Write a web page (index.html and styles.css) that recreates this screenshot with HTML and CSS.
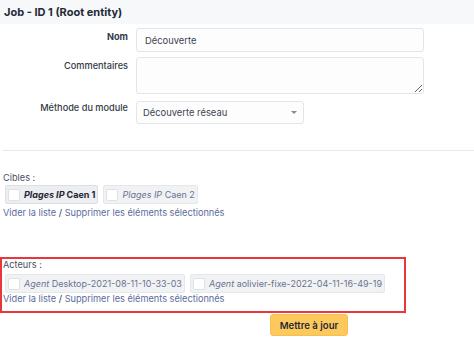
FILE: index.html
```html
<!DOCTYPE html>
<html lang="fr">
<head>
    <meta charset="UTF-8">
    <title>Job - ID 1</title>
    <link rel="stylesheet" href="styles.css">
</head>
<body>
    <div class="card-header">Job - ID 1 (Root entity)</div>

    <form class="job-form">
        <div class="form-row">
            <label class="form-label label-strong">Nom</label>
            <input class="form-input" type="text" value="Découverte">
        </div>
        <div class="form-row">
            <label class="form-label">Commentaires</label>
            <textarea class="form-textarea"></textarea>
        </div>
        <div class="form-row">
            <label class="form-label">Méthode du module</label>
            <div class="form-select">
                <span>Découverte réseau</span>
                <span class="select-arrow"></span>
            </div>
        </div>

        <hr class="separator">

        <div class="items-block targets">
            <div class="items-title">Cibles :</div>
            <div class="chips">
                <span class="chip chip-active"><span class="chip-check"></span><em>Plages IP</em>&nbsp;Caen 1</span>
                <span class="chip"><span class="chip-check"></span><em>Plages IP</em>&nbsp;Caen 2</span>
            </div>
            <div class="items-links">
                <a href="#">Vider la liste</a> / <a href="#">Supprimer les éléments sélectionnés</a>
            </div>
        </div>

        <div class="items-block highlight">
            <div class="items-title">Acteurs :</div>
            <div class="chips">
                <span class="chip"><span class="chip-check"></span><em>Agent</em>&nbsp;Desktop-2021-08-11-10-33-03</span>
                <span class="chip"><span class="chip-check"></span><em>Agent</em>&nbsp;aolivier-fixe-2022-04-11-16-49-19</span>
            </div>
            <div class="items-links">
                <a href="#">Vider la liste</a> / <a href="#">Supprimer les éléments sélectionnés</a>
            </div>
        </div>

        <div class="actions">
            <button type="button" class="btn-update">Mettre à jour</button>
        </div>
    </form>
</body>
</html>
```

FILE: styles.css
```css
body {
    margin: 0;
    padding: 0;
    font-family: Inter, 'Noto Sans', sans-serif;
    font-size: 9.2px;
    color: #2c3341;
    background: #fff;
}

.card-header {
    height: 24px;
    line-height: 24px;
    padding-left: 4px;
    background: #f6f8fa;
    font-weight: 700;
    font-size: 11px;
    color: #232a36;
}

.job-form {
    margin: 0;
    padding-top: 4px;
}

.form-row {
    display: grid;
    grid-template-columns: 128px 288px;
    column-gap: 8px;
    margin-bottom: 5px;
}

.form-label {
    text-align: right;
    padding-top: 3px;
    font-weight: 500;
    color: #343a46;
}

.label-strong {
    font-weight: 700;
}

.form-input, .form-textarea, .form-select {
    box-sizing: border-box;
    border: 1px solid #e3e5e8;
    border-radius: 3px;
    background: #fdfdfd;
    font-family: inherit;
    font-size: 9.4px;
    color: #3c4350;
    margin: 0;
}

.form-input {
    height: 24px;
    padding: 0 8px;
}

.form-textarea {
    height: 37px;
    resize: vertical;
}

.form-select {
    width: 168px;
    height: 23px;
    display: flex;
    align-items: center;
    justify-content: space-between;
    padding: 0 6px;
    margin-top: 2px;
}

.select-arrow {
    width: 0;
    height: 0;
    border-left: 3px solid transparent;
    border-right: 3px solid transparent;
    border-top: 3px solid #888;
}

.separator {
    border: 0;
    border-top: 1px solid #e8e9eb;
    margin: 26px 0 0 3px;
}

.items-block {
    padding: 0 3px;
}

.targets {
    margin-top: 21px;
}

.items-title {
    color: #4a505c;
    line-height: 12px;
}

.chips {
    display: flex;
    gap: 5px;
    margin: 1px 0 3px 2px;
    white-space: nowrap;
}

.chip {
    display: inline-flex;
    align-items: center;
    height: 17px;
    padding: 0 2px;
    background: #f1f2f4;
    border: 1px solid #e6e7ea;
    border-radius: 2px;
    color: #6b7390;
    font-size: 9px;
}

.chip-active {
    color: #1f2530;
    font-weight: 700;
    background: #eceef1;
    border-color: #dcdfe4;
}

.chip-check {
    width: 10px;
    height: 10px;
    background: #fff;
    border: 1px solid #dfe1e5;
    border-radius: 2px;
    margin-right: 4px;
}

.items-links {
    color: #2c3341;
    line-height: 12px;
}

.items-links a {
    color: #5a6b9c;
    text-decoration: none;
}

.highlight {
    margin-top: 38px;
    width: 400px;
    border: 2px solid #e8363a;
    padding: 0 1px 6px 1px;
}

.highlight .chips {
    margin-top: 3px;
    margin-bottom: 0;
}

.actions {
    padding-left: 270px;
}

.btn-update {
    display: block;
    width: 78px;
    height: 22px;
    margin-top: 1px;
    background: #fec95c;
    border: 1px solid #f5c04f;
    border-radius: 3px;
    font-family: inherit;
    font-size: 9.6px;
    font-weight: 600;
    color: #1f2937;
}
```
